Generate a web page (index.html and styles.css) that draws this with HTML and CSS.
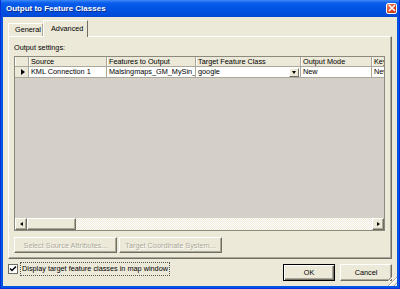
FILE: index.html
```html
<!DOCTYPE html>
<html lang="en">
<head>
    <meta charset="UTF-8">
    <title>Output to Feature Classes</title>
    <link rel="stylesheet" href="styles.css">
</head>
<body>
    <div class="window">
        <div class="titlebar">
            <span class="title">Output to Feature Classes</span>
            <span class="close">
                <svg width="8" height="8" viewBox="0 0 8 8"><path d="M1 1 L7 7 M7 1 L1 7" stroke="#fff" stroke-width="1.6"/></svg>
            </span>
        </div>

        <div class="client">
            <div class="tabs">
                <div class="tab">General</div>
                <div class="tab active">Advanced</div>
            </div>

            <div class="panel">
                <div class="label">Output settings:</div>

                <!-- data grid -->
                <div class="grid">
                    <div class="head">
                        <div class="cell rh"></div>
                        <div class="cell c1">Source</div>
                        <div class="cell c2">Features to Output</div>
                        <div class="cell c3">Target Feature Class</div>
                        <div class="cell c4">Output Mode</div>
                        <div class="cell c5">Key</div>
                    </div>
                    <div class="row">
                        <div class="cell rh"><span class="arrow"></span></div>
                        <div class="cell c1">KML Connection 1</div>
                        <div class="cell c2">Malsingmaps_GM_MySin_</div>
                        <div class="cell c3"><span>google</span><span class="drop"><span class="down"></span></span></div>
                        <div class="cell c4">New</div>
                        <div class="cell c5">New</div>
                    </div>
                    <div class="empty"></div>
                    <div class="hscroll">
                        <div class="sbtn"><span class="left"></span></div>
                        <div class="thumb"></div>
                        <div class="track"></div>
                        <div class="sbtn"><span class="right"></span></div>
                    </div>
                </div>

                <div class="actions">
                    <button class="btn wide" disabled>Select Source Attributes...</button>
                    <button class="btn wide" disabled>Target Coordinate System...</button>
                </div>
            </div>

            <div class="footer">
                <label class="check">
                    <span class="box">
                        <svg width="8" height="8" viewBox="0 0 8 8"><path d="M1 3.5 L3 5.5 L7 1.5" stroke="#000" stroke-width="1.5" fill="none"/></svg>
                    </span>
                    <span class="focus">Display target feature classes in map window</span>
                </label>
                <button class="btn small default">OK</button>
                <button class="btn small">Cancel</button>
            </div>
            <div class="grip"></div>
        </div>
    </div>
</body>
</html>
```

FILE: styles.css
```css
* {
    box-sizing: border-box;
}

body {
    margin: 0;
    font-family: "Liberation Sans", Arial, sans-serif;
    font-size: 7.3px;
    color: #000;
}

.window {
    width: 400px;
    height: 289px;
    display: flex;
    flex-direction: column;
    background: #0054e3;
    border-left: 1px solid #0831d9;
    border-right: 1px solid #0831d9;
    border-bottom: 1px solid #0831d9;
}

/* title bar */
.titlebar {
    height: 17px;
    flex: none;
    display: flex;
    align-items: center;
    padding: 0 2px 1px 5px;
    background: linear-gradient(#3d8af7, #0a5ded 3px, #0054e3 8px, #004ddc 14px, #0048d2);
}

.title {
    color: #fff;
    font-weight: bold;
    font-size: 8px;
    text-shadow: 1px 1px 0 #0b2a8a;
}

.close {
    margin-left: auto;
    width: 11px;
    height: 11px;
    display: flex;
    align-items: center;
    justify-content: center;
    border: 1px solid #fff;
    border-radius: 2px;
    background: linear-gradient(135deg, #e88a6e, #d9411c 60%, #c23510);
}

/* dialog face */
.client {
    flex: 1;
    margin: 0 2px 2px;
    background: #ece9d8;
    display: flex;
    flex-direction: column;
    position: relative;
}

.tabs {
    height: 19px;
    flex: none;
    display: flex;
    align-items: flex-end;
    padding-left: 5px;
}

.tab {
    height: 13px;
    line-height: 12px;
    padding: 0 1px 0 6px;
    border-top: 1px solid #fff;
    border-left: 1px solid #fff;
    border-right: 1px solid #aca899;
}

.tab.active {
    height: 17px;
    line-height: 15px;
    margin-bottom: -1px;
    padding: 0 4px 0 7px;
    background: #ece9d8;
    border-right: 1px solid #716f64;
    position: relative;
    z-index: 1;
}

.panel {
    height: 223px;
    flex: none;
    margin: 0 5px;
    padding: 6px 6px 0 5px;
    display: flex;
    flex-direction: column;
    border: 1px solid;
    border-color: #fff #716f64 #716f64 #fff;
    box-shadow: inset -1px -1px 0 #aca899;
}

.label {
    height: 10px;
    line-height: 10px;
}

/* grid */
.grid {
    margin-top: 3px;
    height: 175px;
    flex: none;
    display: flex;
    flex-direction: column;
    border: 1px solid #8c8a7c;
    overflow: hidden;
}

.head,
.row {
    display: flex;
    flex: none;
}

.head {
    height: 10px;
}

.row {
    height: 11px;
}

.cell {
    flex: none;
    padding-left: 2px;
    white-space: nowrap;
    overflow: hidden;
    border-right: 1px solid #aca899;
    border-bottom: 1px solid #aca899;
    background: #fff;
}

.head .cell {
    line-height: 9px;
    background: #ece9d8;
    box-shadow: inset 1px 0 0 #fff;
}

.row .cell {
    line-height: 10px;
}

.rh {
    width: 14px;
}

.row .rh {
    background: #ece9d8;
    display: flex;
    align-items: center;
    justify-content: center;
}

.arrow {
    width: 0;
    height: 0;
    border-top: 3.5px solid transparent;
    border-bottom: 3.5px solid transparent;
    border-left: 4px solid #000;
    margin-left: 1px;
}

.c1 { width: 78px; }
.c2 { width: 89px; }
.c3 { width: 105px; }
.c4 { width: 71px; }
.c5 { width: 40px; }

.row .c3 {
    display: flex;
    align-items: center;
}

.drop {
    margin-left: auto;
    margin-right: 1px;
    width: 10px;
    height: 9px;
    display: flex;
    align-items: center;
    justify-content: center;
    background: #ece9d8;
    border: 1px solid;
    border-color: #fff #716f64 #716f64 #fff;
}

.down {
    width: 0;
    height: 0;
    border-left: 2.5px solid transparent;
    border-right: 2.5px solid transparent;
    border-top: 3px solid #000;
    margin-top: 1px;
}

.empty {
    flex: 1;
    background: #d4d0c8;
}

.hscroll {
    height: 12px;
    flex: none;
    display: flex;
}

.sbtn,
.thumb {
    height: 12px;
    flex: none;
    background: #ece9d8;
    border: 1px solid;
    border-color: #fff #716f64 #716f64 #fff;
    box-shadow: inset -1px -1px 0 #aca899;
}

.sbtn {
    width: 12px;
    display: flex;
    align-items: center;
    justify-content: center;
}

.thumb {
    width: 49px;
}

.track {
    flex: 1;
    background: repeating-conic-gradient(#fff 0 25%, #ece9d8 0 50%) 0 0 / 2px 2px;
}

.left,
.right {
    width: 0;
    height: 0;
    border-top: 2.5px solid transparent;
    border-bottom: 2.5px solid transparent;
}

.left {
    border-right: 3px solid #000;
}

.right {
    border-left: 3px solid #000;
}

/* buttons */
.btn {
    font: inherit;
    padding: 0;
    background: #ece9d8;
    color: #000;
    border: 1px solid;
    border-color: #fff #716f64 #716f64 #fff;
    box-shadow: inset -1px -1px 0 #aca899;
}

.btn:disabled {
    color: #aca899;
    text-shadow: 1px 1px 0 #fff;
}

.actions {
    margin-top: 6px;
    display: flex;
    gap: 2px;
}

.wide {
    width: 103px;
    height: 16px;
}

.footer {
    flex: 1;
    display: flex;
    align-items: flex-start;
    padding: 5px 5px 0 5px;
}

.check {
    display: flex;
    align-items: center;
    gap: 2px;
    margin-top: -2px;
}

.box {
    width: 10px;
    height: 10px;
    display: flex;
    align-items: center;
    justify-content: center;
    background: #fff;
    border: 1px solid #716f64;
}

.focus {
    height: 14px;
    line-height: 12px;
    padding: 0 1px;
    border: 1px dotted #555;
}

.small {
    width: 52px;
    height: 17px;
}

.default {
    margin-left: auto;
    margin-right: 5px;
    border-color: #000;
    box-shadow: inset 1px 1px 0 #fff, inset -1px -1px 0 #716f64, inset -2px -2px 0 #aca899;
}

.grip {
    position: absolute;
    right: 0;
    bottom: 0;
    width: 9px;
    height: 9px;
    background: repeating-linear-gradient(135deg, transparent 0 2px, #aca899 2px 3px, #fff 3px 4px);
}
```
